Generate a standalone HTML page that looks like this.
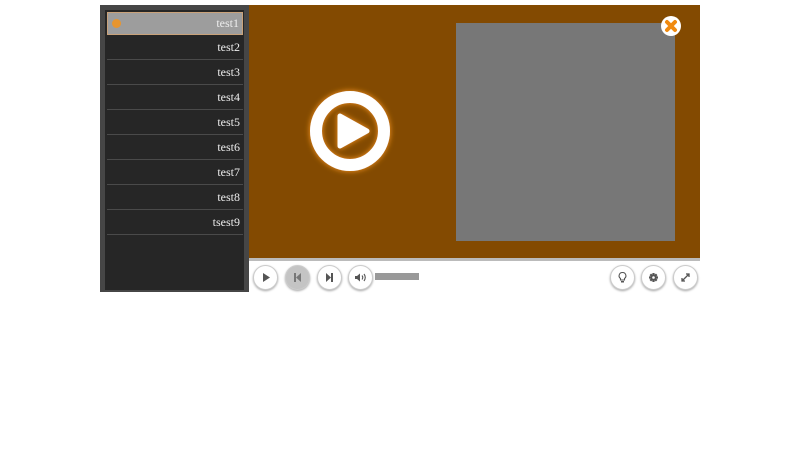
<!DOCTYPE html>
<html><head><style>
body{margin:0;width:800px;height:450px;background:#fff;position:relative;overflow:hidden;font-family:"Liberation Serif",serif}
.side{position:absolute;left:100px;top:5px;width:149px;height:287px;background:#464646}
.inner{position:absolute;left:5px;top:5px;width:139px;height:280px;background:#262626}
.item{position:absolute;left:2px;width:136px;height:25px;border-bottom:1px solid #4a4a4a;color:#eee;font-size:12px;text-align:right;box-sizing:border-box;padding-right:3px;line-height:24px}
.item.sel{background:#9d9d9d;border:1px solid #c9a27a;height:23px;line-height:21px;padding-right:3px}
.dot{position:absolute;left:4px;top:6px;width:9px;height:9px;border-radius:50%;background:#e8952e}
.main{position:absolute;left:249px;top:5px;width:451px;height:253px;background:#834a01}
.bar{position:absolute;left:249px;top:258px;width:451px;height:3px;background:#bbb}
.gray{position:absolute;left:456px;top:23px;width:219px;height:218px;background:#777}
.btn{position:absolute;top:265px;width:23px;height:23px;border-radius:50%;background:#fff;border:1px solid #ccc;box-shadow:0 1px 2px rgba(0,0,0,.35)}
.btn svg{position:absolute;left:0;top:0}
</style></head><body>
<div class="side"><div class="inner">
<div class="item sel" style="top:2px"><div class="dot"></div>test1</div>
<div class="item" style="top:25px">test2</div>
<div class="item" style="top:50px">test3</div>
<div class="item" style="top:75px">test4</div>
<div class="item" style="top:100px">test5</div>
<div class="item" style="top:125px">test6</div>
<div class="item" style="top:150px">test7</div>
<div class="item" style="top:175px">test8</div>
<div class="item" style="top:200px">tsest9</div>
</div></div>
<div class="main"></div>
<div class="gray"></div>
<div class="bar"></div>
<svg style="position:absolute;left:0;top:0" width="800" height="450">
<defs><filter id="g" x="-50%" y="-50%" width="200%" height="200%"><feGaussianBlur stdDeviation="3" result="b"/><feFlood flood-color="#ff9a20"/><feComposite in2="b" operator="in" result="c"/><feMerge><feMergeNode in="c"/><feMergeNode in="SourceGraphic"/></feMerge></filter></defs>
<g filter="url(#g)">
<circle cx="350" cy="131" r="34" fill="none" stroke="#fff" stroke-width="12"/>
<path d="M340 116 L367 131 L340 146 Z" fill="#fff" stroke="#fff" stroke-width="5" stroke-linejoin="round"/>
</g>
<circle cx="671" cy="26" r="10" fill="#fff"/>
<path d="M667 22 L675 30 M675 22 L667 30" stroke="#f08a10" stroke-width="4" stroke-linecap="round"/>
<rect x="375" y="273" width="44" height="7" fill="#999"/>
</svg>
<div class="btn" style="left:253px"><svg width="23" height="23"><path d="M9 7 L16 11.5 L9 16Z" fill="#555"/></svg></div>
<div class="btn" style="left:285px;background:#c4c4c4"><svg width="23" height="23"><rect x="8" y="7" width="2" height="9" fill="#777"/><path d="M15 7 L10 11.5 L15 16Z" fill="#777"/></svg></div>
<div class="btn" style="left:317px"><svg width="23" height="23"><rect x="13" y="7" width="2" height="9" fill="#555"/><path d="M8 7 L13 11.5 L8 16Z" fill="#555"/></svg></div>
<div class="btn" style="left:348px"><svg width="23" height="23"><path d="M6 10 H8 L11 7.5 V15.5 L8 13 H6Z" fill="#555"/><path d="M13 9.5 Q14.5 11.5 13 13.5 M15 8 Q17.5 11.5 15 15" stroke="#555" fill="none" stroke-width="1.1"/></svg></div>
<div class="btn" style="left:610px"><svg width="23" height="23"><path d="M11.5 6.5 a3.3 3.3 0 0 1 2 6 V14 H9.5 V12.5 A3.3 3.3 0 0 1 11.5 6.5Z" fill="none" stroke="#555" stroke-width="1.1"/><rect x="10" y="15" width="3" height="1.5" fill="#555"/></svg></div>
<div class="btn" style="left:641px"><svg width="23" height="23"><path d="M11.5 7V16M7 11.5H16M8.3 8.3L14.7 14.7M14.7 8.3L8.3 14.7" stroke="#555" stroke-width="2.2"/><circle cx="11.5" cy="11.5" r="3.2" fill="#555"/><circle cx="11.5" cy="11.5" r="1.3" fill="#fff"/></svg></div>
<div class="btn" style="left:673px"><svg width="23" height="23"><path d="M8 15 L15 8 M12 8 H15 V11 M8 12 V15 H11" stroke="#555" fill="none" stroke-width="1.3"/></svg></div>
</body></html>
